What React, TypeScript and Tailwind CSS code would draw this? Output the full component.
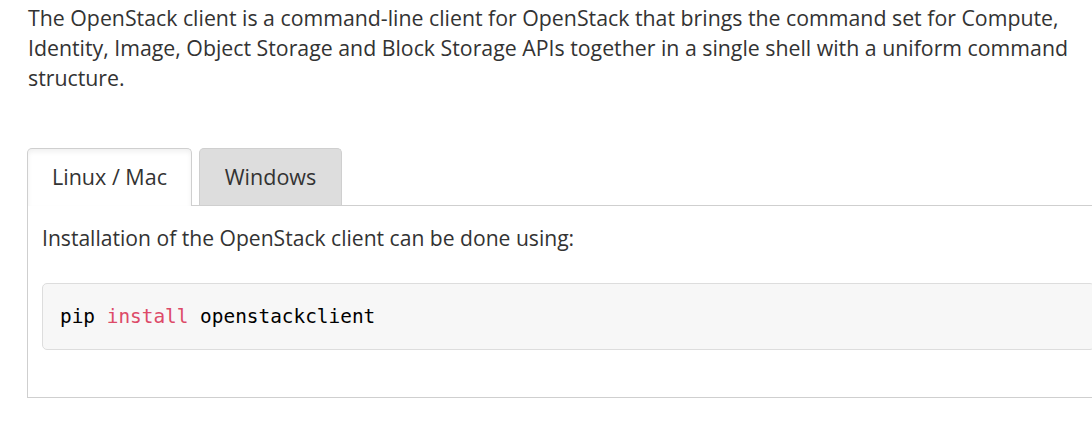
export default function App() {
  return (
    <div className="bg-white min-h-screen overflow-hidden text-[#333] font-['Open_Sans',sans-serif]">
      <div className="pl-[28px] pt-[3px] w-[1110px]">
        <p className="text-[21.3px] leading-[30px] w-[1080px]">
          The OpenStack client is a command-line client for OpenStack that brings the command set for Compute,
          Identity, Image, Object Storage and Block Storage APIs together in a single shell with a uniform command
          structure.
        </p>
        <div className="mt-[55px] -ml-px">
          <div className="flex gap-[7px] items-end">
            <div className="h-[58px] -mb-px w-[165px] flex items-center justify-center border border-[#cfcfcf] border-b-0 rounded-t-[5px] bg-white shadow-[inset_0_3px_5px_rgba(0,0,0,0.06)] relative z-10 text-[21.5px] text-[#333]">
              Linux / Mac
            </div>
            <div className="h-[57px] w-[143px] flex items-center justify-center border border-[#cfcfcf] border-b-0 rounded-t-[5px] bg-[#dddddd] text-[21.5px] text-[#333]">
              Windows
            </div>
          </div>
          <div className="border border-[#cfcfcf] h-[193px] px-[14px] pt-[17px]">
            <p className="text-[21.1px] leading-[30px]">Installation of the OpenStack client can be done using:</p>
            <div className="mt-[30px] h-[67px] bg-[#f7f7f7] border border-[#dddddd] rounded-[5px] flex items-center pl-[17px]">
              <code className="text-[19.4px] text-black font-['DejaVu_Sans_Mono',monospace]">
                pip <span className="text-[#dd4a68]">install</span> openstackclient
              </code>
            </div>
          </div>
        </div>
      </div>
    </div>
  )
}
